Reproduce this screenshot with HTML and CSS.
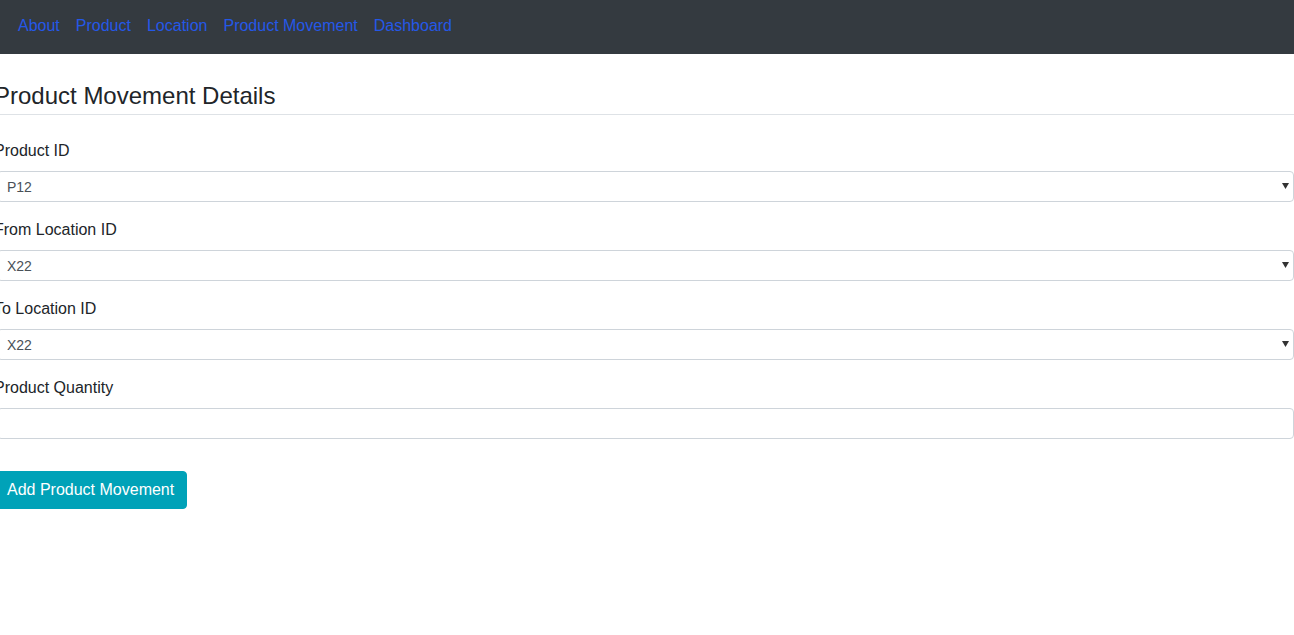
FILE: index.html
```html
<!DOCTYPE html>
<html>
<head>
<meta charset="utf-8">
<title>Product Movement</title>
<link rel="stylesheet" href="styles.css">
</head>
<body>
<nav class="navbar">
  <a class="nav-link" href="#">About</a>
  <a class="nav-link" href="#">Product</a>
  <a class="nav-link" href="#">Location</a>
  <a class="nav-link" href="#">Product Movement</a>
  <a class="nav-link" href="#">Dashboard</a>
</nav>
<main class="content">
  <h4 class="title">Product Movement Details</h4>
  <hr class="rule">
  <form class="form">
    <div class="group">
      <label class="label">Product ID</label>
      <div class="select-wrap">
        <select class="control"><option>P12</option></select>
        <svg class="arrow" width="7" height="6" viewBox="0 0 7 6"><path d="M0 0H7L3.5 6Z" fill="#333"/></svg>
      </div>
    </div>
    <div class="group">
      <label class="label">From Location ID</label>
      <div class="select-wrap">
        <select class="control"><option>X22</option></select>
        <svg class="arrow" width="7" height="6" viewBox="0 0 7 6"><path d="M0 0H7L3.5 6Z" fill="#333"/></svg>
      </div>
    </div>
    <div class="group">
      <label class="label">To Location ID</label>
      <div class="select-wrap">
        <select class="control"><option>X22</option></select>
        <svg class="arrow" width="7" height="6" viewBox="0 0 7 6"><path d="M0 0H7L3.5 6Z" fill="#333"/></svg>
      </div>
    </div>
    <div class="group">
      <label class="label">Product Quantity</label>
      <input class="control" type="text">
    </div>
    <button class="btn" type="button">Add Product Movement</button>
  </form>
</main>
</body>
</html>
```
FILE: styles.css
```css
* { box-sizing: border-box; }
html, body { margin: 0; padding: 0; }
body {
  font-family: "Liberation Sans", Arial, sans-serif;
  font-size: 16px;
  line-height: 1.5;
  color: #212529;
  background: #fff;
  overflow: hidden;
}
.navbar {
  display: flex;
  align-items: center;
  height: 54px;
  padding: 0 10px;
  background: #343a40;
}
.nav-link {
  color: #2458e8;
  text-decoration: none;
  padding: 0 8px;
  font-size: 16px;
  line-height: 24px;
  margin-top: -2px;
}
.content {
  margin-left: -3px;
  margin-right: 0;
}
.title {
  margin: 27px 0 0 -3px;
  font-size: 24px;
  font-weight: 400;
  line-height: 29px;
}
.rule {
  margin: 4px 0 0 3px;
  border: 0;
  border-top: 1px solid #dee2e6;
}
.form {
  display: flex;
  flex-direction: column;
  padding-top: 24px;
}
.group {
  display: flex;
  flex-direction: column;
  margin-bottom: 16px;
}
.label {
  line-height: 24px;
  margin-bottom: 8px;
  margin-left: -3px;
}
.select-wrap {
  position: relative;
}
.control {
  display: block;
  height: 31px;
  width: 100%;
  padding: 4px 9px;
  font-family: "Liberation Sans", Arial, sans-serif;
  font-size: 14px;
  color: #495057;
  background: #fff;
  border: 1px solid #ced4da;
  border-radius: 4px;
  outline: none;
  -webkit-appearance: none;
  appearance: none;
}
.arrow {
  position: absolute;
  right: 5px;
  top: 12px;
  pointer-events: none;
}
.btn {
  align-self: flex-start;
  margin-top: 16px;
  margin-left: -3px;
  height: 38px;
  padding: 0 12px;
  font-family: "Liberation Sans", Arial, sans-serif;
  font-size: 16px;
  color: #fff;
  background: #00a2b8;
  border: 1px solid #00a2b8;
  border-radius: 4px;
}
```
